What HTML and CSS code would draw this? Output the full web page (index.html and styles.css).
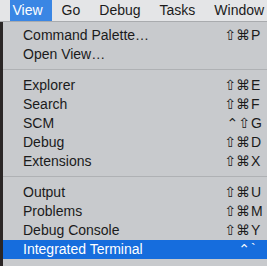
FILE: index.html
```html
<!DOCTYPE html>
<html lang="en">
<head>
    <meta charset="UTF-8">
    <meta name="viewport" content="width=device-width, initial-scale=1.0">
    <title>View Menu</title>
    <link rel="stylesheet" href="styles.css">
</head>
<body>

    <div class="menubar">
        <span class="bar-item active">View</span>
        <span class="bar-item">Go</span>
        <span class="bar-item">Debug</span>
        <span class="bar-item">Tasks</span>
        <span class="bar-item">Window</span>
    </div>

    <div class="menu">
        <div class="row"><span class="label">Command Palette…</span><span class="mods">⇧⌘</span><span class="key">P</span></div>
        <div class="row"><span class="label">Open View…</span><span class="mods"></span><span class="key"></span></div>
        <div class="sep"></div>
        <div class="row"><span class="label">Explorer</span><span class="mods">⇧⌘</span><span class="key">E</span></div>
        <div class="row"><span class="label">Search</span><span class="mods">⇧⌘</span><span class="key">F</span></div>
        <div class="row"><span class="label">SCM</span><span class="mods">⌃⇧</span><span class="key">G</span></div>
        <div class="row"><span class="label">Debug</span><span class="mods">⇧⌘</span><span class="key">D</span></div>
        <div class="row"><span class="label">Extensions</span><span class="mods">⇧⌘</span><span class="key">X</span></div>
        <div class="sep"></div>
        <div class="row"><span class="label">Output</span><span class="mods">⇧⌘</span><span class="key">U</span></div>
        <div class="row"><span class="label">Problems</span><span class="mods">⇧⌘</span><span class="key">M</span></div>
        <div class="row"><span class="label">Debug Console</span><span class="mods">⇧⌘</span><span class="key">Y</span></div>
        <div class="row selected"><span class="label">Integrated Terminal</span><span class="mods">⌃</span><span class="key">`</span></div>
    </div>

</body>
</html>
```

FILE: styles.css
```css
body {
    margin: 0;
    width: 267px;
    height: 266px;
    overflow: hidden;
    background: #2a2626;
    font-family: "Liberation Sans", "DejaVu Sans", sans-serif;
    font-size: 14px;
    color: #1b1b1b;
}

.menubar {
    display: flex;
    height: 21px;
    line-height: 21px;
    padding-left: 10px;
    background: #e4e5e7;
    border-bottom: 1px solid #a9abae;
    white-space: nowrap;
}

.bar-item {
    padding: 0 9.5px;
}

.bar-item.active {
    padding: 0 9.5px 0 2.5px;
    background: #3a86e4;
    color: #fff;
}

.menu {
    margin-left: 3px;
    padding: 4px 0 8px;
    background: #c8cacd;
}

.row {
    display: flex;
    height: 19px;
    line-height: 19px;
    padding-left: 20px;
    white-space: nowrap;
}

.row .label {
    flex: 1;
}

.row .mods {
    font-family: "DejaVu Sans", sans-serif;
    font-size: 14px;
    text-align: right;
    padding-right: 1px;
}

.row .key {
    width: 12px;
    padding-right: 4px;
}

.row.selected {
    background: #166ddd;
    color: #fff;
}

.sep {
    height: 1px;
    margin: 5px 0 6px;
    background: #afb1b4;
}
```
